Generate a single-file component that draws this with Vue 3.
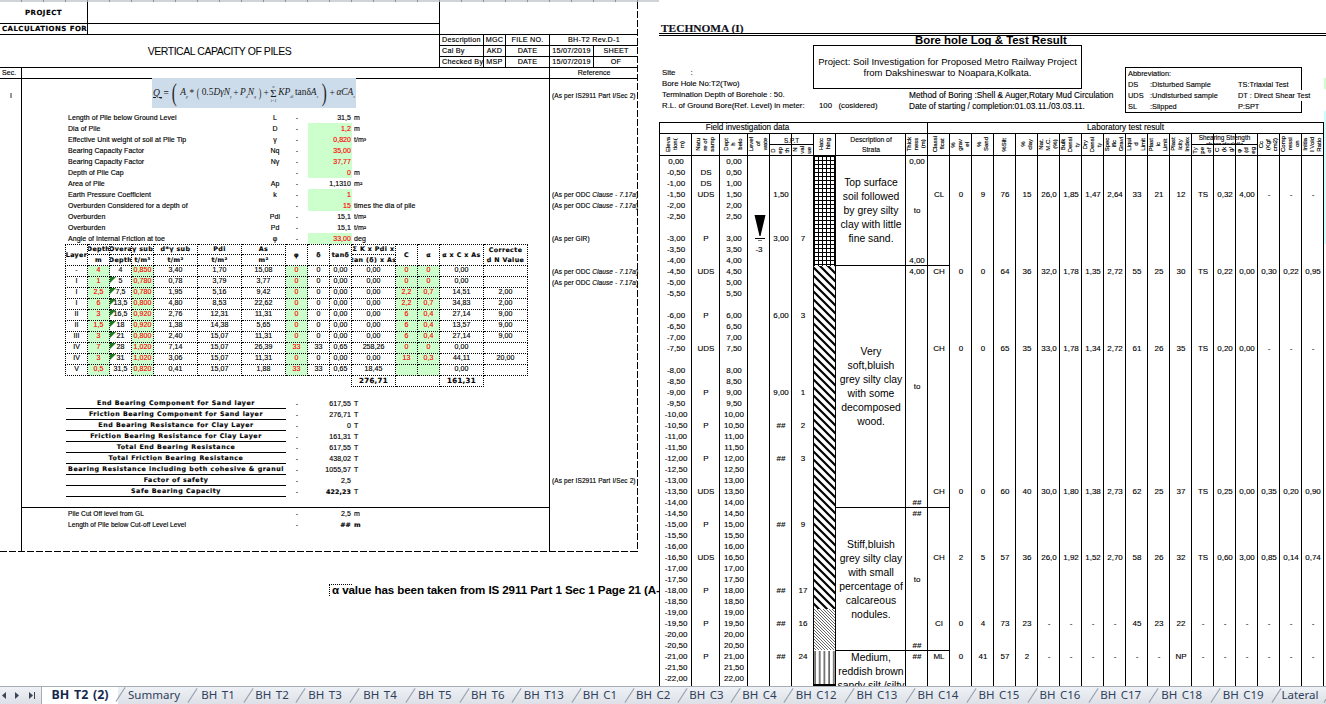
<script setup>
const area = (c) => ({ gridArea: `${c.r + 1} / ${c.c + 1} / span ${c.rs} / span ${c.s}` })

// left sheet: 22px columns, 11px rows, like the worksheet itself
const left = []
const addL = (c, s, r, rs, t, cls = "", em = "") => left.push({ c, s, r, rs, t, cls, em })

addL(1, 24, 7, 39, "", "br bb")
addL(1, 24, 46, 4, "", "br")
addL(0, 1, 6, 44, "", "br")

addL(0, 4, 0, 2, "PROJECT", "hb top-h ctr mid br bb")
addL(4, 16, 0, 2, "", "br bb")
addL(20, 9, 0, 3, "", "bb")
addL(0, 4, 2, 1, "CALCULATIONS FOR", "hb top-h pad br bb")
addL(4, 16, 2, 1, "", "br bb")
addL(0, 20, 3, 3, "VERTICAL CAPACITY OF PILES", "title ctr mid br bb")

const info = [
  ["Description", "MGC", "FILE NO."],
  ["Cal By", "AKD", "DATE"],
  ["Checked By", "MSP", "DATE"],
]
info.forEach((row, i) => {
  addL(20, 2, 3 + i, 1, row[0], "md pad br bb")
  addL(22, 1, 3 + i, 1, row[1], "md ctr br bb")
  addL(23, 2, 3 + i, 1, row[2], "md ctr br bb")
})
addL(25, 4, 3, 1, "BH-T2 Rev.D-1", "md ctr bb")
addL(25, 2, 4, 1, "15/07/2019", "md ctr br bb")
addL(27, 2, 4, 1, "SHEET", "md ctr bb")
addL(25, 2, 5, 1, "15/07/2019", "md ctr br bb")
addL(27, 2, 5, 1, "OF", "md ctr bb")

addL(0, 1, 6, 1, "Sec.", "pad br bb")
addL(1, 24, 6, 1, "", "br bb")
addL(25, 4, 6, 1, "Reference", "ctr bb")
addL(0, 1, 8, 1, "I", "ctr")

const params = [
  ["Length of Pile below Ground Level", "L", "31,5", "m", 0],
  ["Dia of Pile", "D", "1,2", "m", 1],
  ["Effective Unit weight of soil at Pile Tip", "γ", "0,820", "t/m³", 1],
  ["Bearing Capacity Factor", "Nq", "35,00", "", 1],
  ["Bearing Capacity Factor", "Nγ", "37,77", "", 1],
  ["Depth of Pile Cap", "", "0", "m", 1],
  ["Area of Pile", "Ap", "1,1310", "m²", 0],
  ["Earth Pressure Coefficient", "k", "1", "", 1],
  ["Overburden Considered for a depth of", "", "15", "times the dia of pile", 1],
  ["Overburden", "Pdi", "15,1", "t/m²", 0],
  ["Overburden", "Pd", "15,1", "t/m²", 0],
  ["Angle of Internal Friction at toe", "φ", "33,00", "deg", 1],
]
params.forEach((p, i) => {
  const r = 10 + i
  addL(3, 9, r, 1, p[0], "pad")
  addL(12, 1, r, 1, p[1], "ctr")
  addL(13, 1, r, 1, "-", "ctr")
  addL(14, 2, r, 1, p[2], p[4] ? "rgt green red" : "rgt")
  addL(16, 6, r, 1, p[3], "unit")
})

// pile table header
const heads = [
  [3, 1, 22, 2, "Layer"],
  [4, 1, 22, 1, "Depth"],
  [4, 1, 23, 1, "m"],
  [5, 1, 22, 1, "Overa"],
  [5, 1, 23, 1, "Depth"],
  [6, 1, 22, 1, "γ sub"],
  [6, 1, 23, 1, "t/m³"],
  [7, 2, 22, 1, "d*γ sub"],
  [7, 2, 23, 1, "t/m²"],
  [9, 2, 22, 1, "Pdi"],
  [9, 2, 23, 1, "t/m²"],
  [11, 2, 22, 1, "As"],
  [11, 2, 23, 1, "m²"],
  [13, 1, 22, 2, "φ"],
  [14, 1, 22, 2, "δ"],
  [15, 1, 22, 2, "tanδ"],
  [16, 2, 22, 1, "Σ K x Pdi x"],
  [16, 2, 23, 1, "tan (δ) x As"],
  [18, 1, 22, 2, "C"],
  [19, 1, 22, 2, "α"],
  [20, 2, 22, 2, "α x C x As"],
]
heads.forEach((h) => addL(h[0], h[1], h[2], h[3], h[4], `hb tbl-h ctr dot ${h[2] === 22 ? "top-line" : ""} ${h[0] === 3 ? "first" : ""} ${h[3] === 2 ? "mid" : ""}`))
addL(22, 2, 22, 2, "Correcte\nd N Value", "hb tbl-h ctr dot top-line mid wrap")

const pileRows = [
  ["-", "4", "4", "0,850", "3,40", "1,70", "15,08", "0", "0", "0,00", "0,00", "0", "0", "0,00", ""],
  ["I", "1", "5", "0,780", "0,78", "3,79", "3,77", "0", "0", "0,00", "0,00", "0", "0", "0,00", ""],
  ["I", "2,5", "7,5", "0,780", "1,95", "5,16", "9,42", "0", "0", "0,00", "0,00", "2,2", "0,7", "14,51", "2,00"],
  ["I", "6", "13,5", "0,800", "4,80", "8,53", "22,62", "0", "0", "0,00", "0,00", "2,2", "0,7", "34,83", "2,00"],
  ["II", "3", "16,5", "0,920", "2,76", "12,31", "11,31", "0", "0", "0,00", "0,00", "6", "0,4", "27,14", "9,00"],
  ["II", "1,5", "18", "0,920", "1,38", "14,38", "5,65", "0", "0", "0,00", "0,00", "6", "0,4", "13,57", "9,00"],
  ["III", "3", "21", "0,800", "2,40", "15,07", "11,31", "0", "0", "0,00", "0,00", "6", "0,4", "27,14", "9,00"],
  ["IV", "7", "28", "1,020", "7,14", "15,07", "26,39", "33", "33", "0,65", "258,26", "0", "0", "0,00", ""],
  ["IV", "3", "31", "1,020", "3,06", "15,07", "11,31", "0", "0", "0,00", "0,00", "13", "0,3", "44,11", "20,00"],
  ["V", "0,5", "31,5", "0,820", "0,41", "15,07", "1,88", "33", "33", "0,65", "18,45", "", "", "0,00", ""],
]
const pileCols = [
  [3, 1, "first"], [4, 1, "green red"], [5, 1, ""], [6, 1, "green red"], [7, 2, ""], [9, 2, ""], [11, 2, ""],
  [13, 1, "green red"], [14, 1, ""], [15, 1, ""], [16, 2, ""], [18, 1, "green red"], [19, 1, "green red"], [20, 2, ""], [22, 2, ""],
]
pileRows.forEach((row, i) => {
  row.forEach((v, j) => {
    const col = pileCols[j]
    const flag = j === 2 && i > 0 && i < 9 ? "flag" : ""
    addL(col[0], col[1], 24 + i, 1, v, `num ctr dot ${col[2]} ${flag}`)
  })
})
addL(16, 2, 34, 1, "276,71", "hb tot ctr dot first")
addL(18, 2, 34, 1, "", "dot")
addL(20, 2, 34, 1, "161,31", "hb tot ctr dot")

const results = [
  ["End Bearing Component for Sand layer", "617,55", "T"],
  ["Friction Bearing Component for Sand layer", "276,71", "T"],
  ["End Bearing Resistance for Clay Layer", "0", "T"],
  ["Friction Bearing Resistance for Clay Layer", "161,31", "T"],
  ["Total End Bearing Resistance", "617,55", "T"],
  ["Total Friction Bearing Resistance", "438,02", "T"],
  ["Bearing Resistance including both cohesive & granul", "1055,57", "T"],
  ["Factor of safety", "2,5", ""],
  ["Safe Bearing Capacity", "422,23", "T"],
]
results.forEach((p, i) => {
  const strong = i === 8 ? "hb" : ""
  addL(3, 10, 36 + i, 1, p[0], "hb res ctr bb")
  addL(13, 1, 36 + i, 1, "-", "ctr")
  addL(14, 2, 36 + i, 1, p[1], `rgt ${strong}`)
  addL(16, 1, 36 + i, 1, p[2], "unit")
})
addL(3, 9, 46, 1, "Pile Cut Off level from GL", "pad thin")
addL(13, 1, 46, 1, "-", "ctr")
addL(14, 2, 46, 1, "2,5", "rgt")
addL(16, 1, 46, 1, "m", "unit")
addL(3, 9, 47, 1, "Length of Pile below Cut-off Level Level", "pad thin")
addL(13, 1, 47, 1, "-", "ctr")
addL(14, 2, 47, 1, "##", "rgt hb")
addL(16, 1, 47, 1, "m", "unit hb")

const clause = "Clause - 7.17a"
addL(25, 4, 8, 1, "(As per IS2911 Part I/Sec 2)", "ref")
addL(25, 4, 17, 1, "(As per ODC ", "ref", clause)
addL(25, 4, 18, 1, "(As per ODC ", "ref", clause)
addL(25, 4, 21, 1, "(As per GIR)", "ref")
addL(25, 4, 24, 1, "(As per ODC ", "ref", clause)
addL(25, 4, 25, 1, "(As per ODC ", "ref", clause)
addL(25, 4, 43, 1, "(As per IS2911 Part I/Sec 2)", "ref")

// right sheet
const right = []
const addR = (c, s, r, rs, t, cls = "") => right.push({ c, s, r, rs, t, cls })
const B = 12 // first body row
const fmt = (n) => n.toFixed(2).replace(".", ",")

const tall = [6, 12, 16]
const rowHeights = [11, 11, 11, 11, 11, 11, 11, 11, 11, 12, 11, 11]
for (let i = 0; i < 46; i++) rowHeights.push(tall.includes(i) ? 22 : 11)
const rowTemplate = rowHeights.map((h) => h + "px").join(" ")

addR(0, 28, 0, 1, "TECHNOMA (I)", "brand")
addR(8, 12, 1, 1, "Bore hole Log & Test Result", "bore")
addR(6, 10, 2, 4, "Project: Soil Investigation for Proposed Metro Railway Project\nfrom Dakshineswar to Noapara,Kolkata.", "project")
addR(0, 6, 4, 1, "Site       :", "line")
addR(0, 6, 5, 1, "Bore Hole No:T2(Two)", "line")
addR(0, 6, 6, 1, "Termination Depth of Borehole : 50.", "line")
addR(0, 6, 7, 1, "R.L. of Ground Bore(Ref. Level) in meter:", "line")
addR(6, 2, 7, 1, "100   (cosidered)", "line l2")
addR(8, 10, 6, 1, "Method of Boring :Shell & Auger,Rotary Mud Circulation", "line l3")
addR(8, 10, 7, 1, "Date of starting / completion:01.03.11./03.03.11.", "line l3")

addR(0, 9, 9, 1, "Field investigation data", "field")
addR(9, 18, 9, 1, "Laboratory test result", "lab")

const rotated = [
  [0, 0, "Eleva\ntion(\nm)"], [1, 0, "Natu\nre of\nsamp"], [2, 0, "Dept\nh\nbelo"], [3, 0, "Level\nof\nwate"],
  [6, 0, "Hatc\nhing"], [8, 0, "Thick\nness\n(m)"], [9, 0, "Classi\nficat"], [10, 0, "%\ngrav\nel"],
  [11, 0, "%\nSand"], [12, 0, "%Silt"], [13, 0, "%\nclay"], [14, 0, "Nat.\nM.C.\n(%)"], [15, 0, "Bulk\nDensi\nty"],
  [16, 0, "Dry\nDensi\nty"], [17, 0, "Spec\nific\nGravi"], [18, 0, "Liqui\nd\nLimit"], [19, 0, "Plast\nic\nLimit"],
  [20, 0, "Plast\nicity\nIndex"], [24, 0, "Cc\n(Kgf\ncm2)"], [25, 0, "Comp\nressi\non"], [26, 0, "Initia\nl Void\nRatio"],
  [4, 1, "D\nep\nth"], [5, 1, "N\nval\nue"], [21, 1, "Ty\npe\nof"], [22, 1, "C\n(k\ng/"], [23, 1, "φ\n(d\neg"],
]
const rotatedCells = rotated.map((h) => ({
  c: h[0], s: 1, r: h[1] ? 11 : 10, rs: h[1] ? 1 : 2, t: h[2],
}))
addR(4, 2, 10, 1, "S.P.T", "rh")
addR(7, 1, 10, 2, "Description of\nStrata", "rh desc-h")
addR(21, 3, 10, 1, "Shearing Strength\ncharacteristic", "rh shear")

const nature = { 1: "DS", 2: "DS", 3: "UDS", 6: "P", 9: "UDS", 12: "P", 15: "UDS", 18: "P", 21: "P", 24: "P", 27: "UDS", 30: "P", 33: "UDS", 36: "P", 39: "P", 42: "P", 45: "P" }
const spt = { 3: ["1,50", ""], 6: ["3,00", "7"], 12: ["6,00", "3"], 18: ["9,00", "1"], 21: ["##", "2"], 24: ["##", "3"], 30: ["##", "9"], 36: ["##", "17"], 39: ["##", "16"], 42: ["##", "24"], 45: ["##", "32"] }
const thick = { 0: "0,00", 8: "4,00", 9: "4,00", 28: "##", 29: "##", 41: "##", 42: "##" }
const lab = {
  3: ["CL", "0", "9", "76", "15", "26,0", "1,85", "1,47", "2,64", "33", "21", "12", "TS", "0,32", "4,00", "-", "-", "-"],
  9: ["CH", "0", "0", "64", "36", "32,0", "1,78", "1,35", "2,72", "55", "25", "30", "TS", "0,22", "0,00", "0,30", "0,22", "0,95"],
  15: ["CH", "0", "0", "65", "35", "33,0", "1,78", "1,34", "2,72", "61", "26", "35", "TS", "0,20", "0,00", "-", "-", "-"],
  27: ["CH", "0", "0", "60", "40", "30,0", "1,80", "1,38", "2,73", "62", "25", "37", "TS", "0,25", "0,00", "0,35", "0,20", "0,90"],
  33: ["CH", "2", "5", "57", "36", "26,0", "1,92", "1,52", "2,70", "58", "26", "32", "TS", "0,60", "3,00", "0,85", "0,14", "0,74"],
  39: ["CI", "0", "4", "73", "23", "-", "-", "-", "-", "45", "23", "22", "-", "-", "-", "-", "-", "-"],
  42: ["ML", "0", "41", "57", "2", "-", "-", "-", "-", "-", "-", "NP", "-", "-", "-", "-", "-", "-"],
}
for (let i = 0; i < 46; i++) {
  const r = B + i
  addR(0, 1, r, 1, i ? "-" + fmt(i / 2) : fmt(0), "v")
  if (nature[i]) addR(1, 1, r, 1, nature[i], "v")
  addR(2, 1, r, 1, fmt(i / 2), "v")
  if (spt[i]) {
    addR(4, 1, r, 1, spt[i][0], "v")
    addR(5, 1, r, 1, spt[i][1], "v")
  }
  if (thick[i]) addR(8, 1, r, 1, thick[i], "v")
  if (lab[i]) lab[i].forEach((t, j) => addR(9 + j, 1, r, 1, t, "v"))
}
addR(3, 1, B + 7, 1, "-3", "v")
addR(8, 1, B + 1, 7, "to", "v to")
addR(8, 1, B + 10, 18, "to", "v to")
addR(8, 1, B + 30, 11, "to", "v to")
;[8, 28, 41].forEach((i) => addR(7, 3, B + i, 1, "", "strata-line"))

addR(7, 1, B, 9, "Top surface\nsoil followed\nby grey silty\nclay with little\nfine sand.", "strata")
addR(7, 1, B + 9, 20, "Very\nsoft,bluish\ngrey silty clay\nwith some\ndecomposed\nwood.", "strata")
addR(7, 1, B + 29, 13, "Stiff,bluish\ngrey silty clay\nwith small\npercentage of\ncalcareous\nnodules.", "strata")
addR(7, 1, B + 42, 4, "Medium,\nreddish brown\nsandy silt /silty", "strata start")

const rules = Array.from({ length: 27 }, (_, i) => ({ c: i, s: 1, r: B, rs: 46 }))
const heads2 = Array.from({ length: 27 }, (_, i) => ({ c: i, s: 1, r: 10, rs: 2 }))

const abbr = [
  ["DS", ":Disturbed Sample", "TS:Triaxial Test"],
  ["UDS", ":Undisturbed sample", "DT : Direct Shear Test"],
  ["SL", ":Slipped", "P:SPT"],
]

const tabs = [
  ["BH T2 (2)", 76], ["Summary", 72], ["BH T1", 56], ["BH T2", 52], ["BH T3", 54], ["BH T4", 56], ["BH T5", 53.5],
  ["BH T6", 52.5], ["BH T13", 59.5], ["BH C1", 53], ["BH C2", 53.5], ["BH C3", 53], ["BH C4", 53], ["BH C12", 60.5],
  ["BH C13", 61], ["BH C14", 61], ["BH C15", 61], ["BH C16", 61], ["BH C17", 60.5], ["BH C18", 61.5], ["BH C19", 61.5], ["Lateral", 52],
]
</script>

<template>
  <div class="screen">
    <div class="panes">
      <section class="pane-left">
        <div class="ruler"></div>
        <div class="grid-left">
          <div class="page"></div>
          <div
            v-for="(cell, i) in left"
            :key="i"
            class="cell"
            :class="cell.cls"
            :style="area(cell)"
          >
            <span>{{ cell.t }}<template v-if="cell.em"><i>{{ cell.em }}</i>)</template></span>
          </div>

          <div class="formula">
            <i class="q">Q<sub>u</sub></i>
            <b>=</b>
            <span class="paren">(</span>
            <i>A<sub>p</sub></i>
            <span>*</span>
            <span class="paren small">(</span>
            <span>0.5<i>DγN<sub>γ</sub></i></span>
            <span>+</span>
            <i>P<sub>d</sub>N<sub>q</sub></i>
            <span class="paren small">)</span>
            <span>+</span>
            <span class="sum"><em>n</em><b>Σ</b><em>i=1</em></span>
            <i>KP<sub>di</sub></i>
            <span>tanδ<i>A<sub>s</sub></i></span>
            <span class="paren">)</span>
            <span>+</span>
            <i>αCA<sub>s</sub></i>
          </div>

          <div class="note"><span class="alpha">α</span> value has been taken from IS 2911 Part 1 Sec 1 Page 21 (A-</div>
        </div>
      </section>

      <section class="pane-right">
        <div class="grid-right" :style="{ gridTemplateRows: rowTemplate }">
          <div class="left-edge"></div>
          <div v-for="(cell, i) in heads2" :key="'h' + i" class="rule head-rule" :style="area(cell)"></div>
          <div v-for="(cell, i) in rules" :key="'r' + i" class="rule" :style="area(cell)"></div>

          <div
            v-for="(cell, i) in right"
            :key="i"
            class="rc"
            :class="cell.cls"
            :style="area(cell)"
          >
            <span>{{ cell.t }}</span>
          </div>

          <div
            v-for="(cell, i) in rotatedCells"
            :key="'t' + i"
            class="rc rot-cell"
            :style="area(cell)"
          >
            <span class="rot">{{ cell.t }}</span>
          </div>

          <div class="abbr">
            <div class="abbr-title">Abbreviation:</div>
            <div v-for="a in abbr" :key="a[0]" class="abbr-row">
              <span>{{ a[0] }}</span>
              <span>{{ a[1] }}</span>
              <span class="abbr-last">{{ a[2] }}</span>
            </div>
          </div>

          <div class="water">
            <svg width="14" height="26" viewBox="0 0 14 26">
              <polygon points="1.5,0 12.5,0 7.5,21 6.5,21" fill="#000" />
              <rect x="2" y="23" width="10" height="1" fill="#000" />
              <rect x="5" y="25" width="4" height="1" fill="#777" />
            </svg>
          </div>

          <div class="hatch">
            <svg width="21" height="539" viewBox="0 0 21 539">
              <defs>
                <pattern id="grid4" width="4" height="4" patternUnits="userSpaceOnUse">
                  <path d="M0.5 0V4M0 0.5H4" stroke="#000" stroke-width="1" fill="none" />
                </pattern>
                <pattern id="diagThick" width="8" height="8" patternUnits="userSpaceOnUse">
                  <path d="M-2 -2L10 10M-10 -2L2 10M6 -2L18 10" stroke="#000" stroke-width="2.2" fill="none" />
                </pattern>
                <pattern id="diagThin" width="3" height="3" patternUnits="userSpaceOnUse">
                  <path d="M-1 -1L4 4M-4 -1L1 4M2 -1L7 4" stroke="#000" stroke-width="0.6" fill="none" />
                </pattern>
                <pattern id="vert" width="4.7" height="8" patternUnits="userSpaceOnUse">
                  <path d="M1 0V8" stroke="#000" stroke-width="1" fill="none" />
                </pattern>
              </defs>
              <rect y="0" width="21" height="110" fill="url(#grid4)" />
              <rect y="110" width="21" height="343" fill="url(#diagThick)" />
              <rect y="453" width="21" height="41" fill="url(#diagThin)" />
              <rect y="495" width="21" height="33" fill="url(#vert)" />
              <rect y="528" width="21" height="11" fill="#000" />
            </svg>
          </div>

          <div class="edge-green"></div>
          <div class="edge-cyan"></div>
        </div>
      </section>
    </div>

    <footer class="tabs">
      <div class="tab-nav">
        <svg width="41" height="12" viewBox="0 0 41 12">
          <polygon points="6,2 6,9 2,5.5" fill="#3a4658" />
          <polygon points="15,2 15,9 19,5.5" fill="#3a4658" />
          <polygon points="29,2 29,9 33,5.5" fill="#3a4658" />
          <rect x="34" y="2" width="1" height="7" fill="#3a4658" />
        </svg>
      </div>
      <div
        v-for="(tab, i) in tabs"
        :key="tab[0]"
        class="tab"
        :class="{ active: i === 0 }"
        :style="{ width: tab[1] + 'px' }"
      >
        {{ tab[0] }}
      </div>
    </footer>
  </div>
</template>

<style scoped>
.screen {
  width: 1326px;
  height: 704px;
  display: flex;
  flex-direction: column;
  overflow: hidden;
  background: #fff;
  color: #000;
  font-family: "Liberation Sans", Arial, sans-serif;
}

.panes {
  height: 686px;
  display: flex;
  overflow: hidden;
}

.pane-left {
  width: 659px;
  flex: none;
  overflow: hidden;
}

.ruler {
  height: 2px;
  background: repeating-linear-gradient(to right, #d0d3d8 0 21px, #8b8f96 21px 22px);
}

.grid-left {
  display: grid;
  grid-template-columns: repeat(29, 22px);
  grid-auto-rows: 11px;
  width: 638px;
}

.page {
  grid-area: 1 / 1 / span 50 / span 29;
  background:
    repeating-linear-gradient(to bottom, #000 0 7px, transparent 7px 9px) right top / 1px 100% no-repeat,
    repeating-linear-gradient(to right, #000 0 7px, transparent 7px 9px) left bottom / 100% 1px no-repeat;
}

.cell {
  display: flex;
  align-items: flex-end;
  box-sizing: border-box;
  overflow: hidden;
  white-space: nowrap;
  font-size: 7px;
  line-height: 10px;
  letter-spacing: 0.05px;
  color: #000;
  -webkit-text-stroke: 0.15px #000;
}

.pad { padding-left: 2px; }
.ctr { justify-content: center; text-align: center; }
.rgt { justify-content: flex-end; padding-right: 1px; }
.mid { align-items: center; }
.unit { padding-left: 2px; }
.thin { font-size: 6.6px; }
.br { border-right: 1px solid #000; }
.bb { border-bottom: 1px solid #000; }
.green { background: #ccffcc; }
.red { color: #ff0000; -webkit-text-stroke: 0.15px #ff0000; }

.hb {
  font-family: "DejaVu Sans", sans-serif;
  font-weight: 700;
  font-size: 6.3px;
  letter-spacing: 0.1px;
}

.top-h { font-size: 7px; letter-spacing: 0.45px; }
.tbl-h { letter-spacing: 0.4px; }
.tot { font-size: 7px; letter-spacing: 0.3px; }
.res { letter-spacing: 0.55px; }

.md { font-size: 7.2px; letter-spacing: 0.25px; }

.title {
  font-size: 10.5px;
  letter-spacing: -0.45px;
  -webkit-text-stroke: 0;
}

.ref {
  padding-left: 2px;
  font-size: 6.5px;
  letter-spacing: 0.1px;
  overflow: visible;
}

.dot {
  border-right: 1px dotted #000;
  border-bottom: 1px dotted #000;
}

.top-line { border-top: 1px dotted #000; }
.first { border-left: 1px dotted #000; margin-left: -1px; }
.num { padding-bottom: 1px; }
.wrap { white-space: pre-line; }

.flag { position: relative; }
.flag::before {
  content: "";
  position: absolute;
  left: 0;
  top: 0;
  width: 6px;
  height: 6px;
  background: #1d7a1d;
  clip-path: polygon(0 0, 100% 0, 0 100%);
}

.formula {
  grid-area: 8 / 8 / span 3 / span 9;
  height: 30px;
  margin: -1px -4px 0 -2px;
  padding: 0 1px;
  display: flex;
  align-items: center;
  justify-content: space-between;
  background: #cddcea;
  font-family: "Liberation Serif", serif;
  font-size: 9.4px;
  color: #1b1b1b;
  white-space: nowrap;
}

.formula sub { font-size: 4px; }
.q { text-decoration: underline; font-size: 9.6px; }
.paren { font-size: 25px; font-weight: 100; line-height: 30px; transform: scaleX(0.6); }
.paren.small { font-size: 13px; line-height: 14px; }

.sum {
  display: flex;
  flex-direction: column;
  align-items: center;
  line-height: 5px;
  font-size: 4px;
}

.sum b { font-size: 11px; font-weight: 400; line-height: 9px; }
.sum em { font-style: italic; }

.note {
  grid-area: 54 / 16 / span 1 / span 14;
  position: relative;
  margin-top: -1px;
  white-space: nowrap;
  font-size: 11.6px;
  font-weight: 700;
  line-height: 12px;
  letter-spacing: -0.1px;
  padding-left: 2px;
  width: 400px;
}

.note::before {
  content: "";
  position: absolute;
  left: -1px;
  top: 0;
  width: 22px;
  height: 11px;
  border-left: 1px dotted #000;
  border-top: 1px dotted #000;
}

.pane-right {
  flex: 1;
  overflow: hidden;
  padding-top: 23px;
}

.grid-right {
  display: grid;
  grid-template-columns: 32px 28px 28px repeat(4, 22px) 70px repeat(19, 22px) 2px;
  margin-left: 1px;
  width: 666px;
}

.left-edge {
  grid-area: 10 / 1 / span 49 / span 1;
  margin-left: -1px;
  border-left: 1px solid #000;
}

.rule {
  border-right: 1px solid #000;
  box-sizing: border-box;
}

.head-rule { border-bottom: 1px solid #000; }

.rc {
  display: flex;
  align-items: flex-end;
  justify-content: center;
  overflow: hidden;
  white-space: pre;
  font-size: 8px;
  line-height: 11px;
  box-sizing: border-box;
  -webkit-text-stroke: 0.12px #000;
}

.v { line-height: 10px; }
.to { align-items: center; }

.brand {
  justify-content: flex-start;
  overflow: visible;
  padding-left: 2px;
  margin-left: -1px;
  margin-bottom: -2px;
  height: 13px;
  border-bottom: 3px double #000;
  box-sizing: border-box;
  font-family: "Liberation Serif", serif;
  font-weight: 700;
  font-size: 11.4px;
  line-height: 10px;
  color: #101020;
}

.bore {
  justify-content: flex-start;
  padding-left: 9px;
  margin-bottom: -1px;
  font-size: 11.4px;
  font-weight: 700;
  text-decoration: underline;
  overflow: visible;
  -webkit-text-stroke: 0;
}

.project {
  align-items: center;
  margin-left: -1px;
  border: 1px solid #000;
  font-size: 9.5px;
  line-height: 11px;
  text-align: center;
  background: #fff;
  -webkit-text-stroke: 0;
}

.line {
  justify-content: flex-start;
  padding-left: 2px;
  font-size: 7.8px;
  overflow: visible;
  line-height: 10px;
}

.l2 { padding-left: 5px; }
.l3 { padding-left: 3px; font-size: 8.3px; }

.field, .lab {
  border-top: 1px solid #000;
  border-bottom: 1px solid #000;
  border-right: 1px solid #000;
  font-size: 8.2px;
  line-height: 10px;
}

.field { padding-right: 92px; }

.rh {
  font-size: 6.4px;
  line-height: 7px;
  text-align: center;
}

.rh.desc-h { align-items: center; line-height: 10px; font-size: 6.8px; }
.rh.shear { border-right: 1px solid #000; border-bottom: 1px solid #000; align-items: flex-start; line-height: 7px; }

.rh:not(.desc-h):not(.shear) { border-right: 1px solid #000; border-bottom: 1px solid #000; }

.rot-cell {
  align-items: center;
  border-right: 1px solid #000;
  border-bottom: 1px solid #000;
  background: #fff;
}

.rot {
  writing-mode: vertical-rl;
  transform: rotate(180deg);
  font-size: 6px;
  line-height: 6.8px;
  white-space: pre;
  text-align: center;
  -webkit-text-stroke: 0.15px #000;
}

.strata-line { border-bottom: 1px solid #000; margin-right: 1px; }

.strata {
  align-items: center;
  font-size: 10.4px;
  line-height: 14px;
  text-align: center;
  -webkit-text-stroke: 0;
}

.strata.start { align-items: flex-start; }

.abbr {
  grid-area: 5 / 19 / span 4 / span 8;
  height: 46px;
  box-sizing: border-box;
  margin-left: -1px;
  border: 1px solid #000;
  padding-left: 2px;
  font-size: 7.4px;
  line-height: 11px;
  white-space: nowrap;
  background: #fff;
  -webkit-text-stroke: 0.12px #000;
}

.abbr-row {
  display: grid;
  grid-template-columns: 22px 88px auto;
}

.abbr-last { justify-self: start; background: #fff; }

.water {
  grid-area: 18 / 4 / span 2 / span 1;
  display: flex;
  justify-content: center;
  align-items: flex-end;
  padding: 0 0 3px 1px;
  overflow: hidden;
}

.hatch {
  grid-area: 13 / 7 / span 46 / span 1;
  overflow: hidden;
}

.hatch svg { display: block; }

.edge-green {
  grid-area: 6 / 28 / span 1 / span 1;
  background: #ccffcc;
}

.edge-cyan {
  grid-area: 9 / 28 / span 11 / span 1;
  background: #ccffff;
}

.tabs {
  height: 18px;
  flex: none;
  display: flex;
  box-sizing: border-box;
  border-top: 1px solid #a7adb5;
  background: linear-gradient(#eef1f5, #dde1e7);
  overflow: hidden;
}

.tab-nav {
  width: 42px;
  flex: none;
  box-sizing: border-box;
  border-right: 1px solid #a7adb5;
  padding-top: 3px;
  display: flex;
}

.tab {
  position: relative;
  flex: none;
  box-sizing: border-box;
  text-align: center;
  font-family: "Noto Sans", sans-serif;
  font-size: 11.5px;
  line-height: 16px;
  word-spacing: 1.5px;
  color: #2f3f5c;
  white-space: nowrap;
}

.tab.active {
  background: #fff;
  font-weight: 700;
  font-size: 12.4px;
  color: #15294d;
  margin-top: -1px;
  padding-top: 1px;
}

.tab::after {
  content: "";
  position: absolute;
  right: -3px;
  top: 0;
  width: 1px;
  height: 17px;
  background: #97a1ae;
  transform: rotate(33deg);
}
</style>
